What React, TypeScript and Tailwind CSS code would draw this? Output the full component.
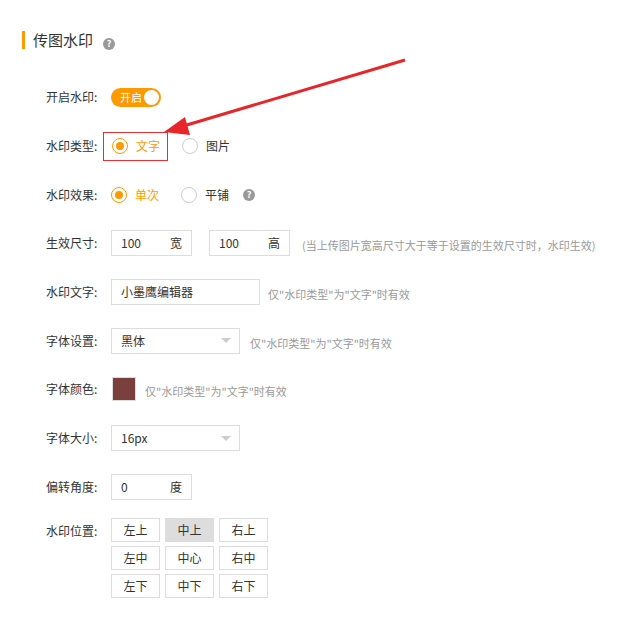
import React from 'react';

const font = { fontFamily: '"Microsoft YaHei","Noto Sans CJK SC",sans-serif' };

const Label: React.FC<{ children: React.ReactNode }> = ({ children }) => (
  <div className="w-[65px] shrink-0 text-[12px] text-[#333]">{children}</div>
);

const Row: React.FC<{ children: React.ReactNode }> = ({ children }) => (
  <div className="flex h-[48.7px] items-center">{children}</div>
);

const Help = () => (
  <span className="inline-flex h-[12px] w-[12px] items-center justify-center rounded-full bg-[#999] text-[9px] font-bold leading-none text-white">?</span>
);

const Radio: React.FC<{ on?: boolean; label: string }> = ({ on, label }) => (
  <div className="flex items-center gap-[8px]">
    <span className={`flex h-[16px] w-[16px] items-center justify-center rounded-full border ${on ? 'border-[#f90]' : 'border-[#ccc]'}`}>
      {on && <span className="h-[8px] w-[8px] rounded-full bg-[#f90]" />}
    </span>
    <span className={`text-[12px] ${on ? 'text-[#f90]' : 'text-[#333]'}`}>{label}</span>
  </div>
);

const Hint: React.FC<{ children: React.ReactNode }> = ({ children }) => (
  <span className="text-[11px] text-[#999]">{children}</span>
);

const Caret = () => <span className="h-0 w-0 border-x-[5px] border-t-[5px] border-x-transparent border-t-[#ccc]" />;

export default function App() {
  const cells = ['左上', '中上', '右上', '左中', '中心', '右中', '左下', '中下', '右下'];
  return (
    <div className="relative h-[620px] w-[620px] bg-white" style={font}>
      <div className="flex items-center pl-[22px] pt-[28px]">
        <div className="h-[18px] w-[3px] bg-[#f90]" />
        <span className="ml-[8px] text-[15px] text-[#333]">传图水印</span>
        <span className="ml-[10px]"><Help /></span>
      </div>
      <div className="pl-[46px] pt-[21px]">
        <Row>
          <Label>开启水印:</Label>
          <div className="flex h-[19px] w-[50px] items-center justify-between rounded-full bg-[#f90] pl-[9px] pr-[2px]">
            <span className="text-[11px] text-white">开启</span>
            <span className="h-[15px] w-[15px] rounded-full bg-white" />
          </div>
        </Row>
        <Row>
          <Label>水印类型:</Label>
          <div className="ml-[-8px] flex items-center gap-[14px]">
            <div className="flex h-[29px] w-[65px] items-center border border-[#e53030] pl-[8px]">
              <Radio on label="文字" />
            </div>
            <Radio label="图片" />
          </div>
        </Row>
        <Row>
          <Label>水印效果:</Label>
          <div className="flex items-center gap-[22px]">
            <Radio on label="单次" />
            <div className="flex items-center gap-[14px]"><Radio label="平铺" /><Help /></div>
          </div>
        </Row>
        <Row>
          <Label>生效尺寸:</Label>
          <div className="flex h-[26px] w-[81px] items-center justify-between border border-[#ddd] px-[9px] text-[12px] text-[#333]"><span>100</span><span>宽</span></div>
          <div className="ml-[17px] flex h-[26px] w-[81px] items-center justify-between border border-[#ddd] px-[9px] text-[12px] text-[#333]"><span>100</span><span>高</span></div>
          <span className="ml-[12px]"><Hint>(当上传图片宽高尺寸大于等于设置的生效尺寸时，水印生效)</Hint></span>
        </Row>
        <Row>
          <Label>水印文字:</Label>
          <div className="flex h-[26px] w-[149px] items-center border border-[#ddd] px-[9px] text-[12px] text-[#333]">小墨鹰编辑器</div>
          <span className="ml-[8px]"><Hint>仅"水印类型"为"文字"时有效</Hint></span>
        </Row>
        <Row>
          <Label>字体设置:</Label>
          <div className="flex h-[26px] w-[129px] items-center justify-between border border-[#ddd] pl-[9px] pr-[8px] text-[12px] text-[#333]"><span>黑体</span><Caret /></div>
          <span className="ml-[10px]"><Hint>仅"水印类型"为"文字"时有效</Hint></span>
        </Row>
        <Row>
          <Label>字体颜色:</Label>
          <div className="ml-[1px] h-[24px] w-[24px] border border-[#ddd] bg-[#7b3f3d]" />
          <span className="ml-[9px]"><Hint>仅"水印类型"为"文字"时有效</Hint></span>
        </Row>
        <Row>
          <Label>字体大小:</Label>
          <div className="flex h-[26px] w-[129px] items-center justify-between border border-[#ddd] pl-[9px] pr-[8px] text-[12px] text-[#333]"><span>16px</span><Caret /></div>
        </Row>
        <Row>
          <Label>偏转角度:</Label>
          <div className="flex h-[26px] w-[81px] items-center justify-between border border-[#ddd] px-[9px] text-[12px] text-[#333]"><span>0</span><span>度</span></div>
        </Row>
        <div className="flex pt-[7px]">
          <div className="pt-[4px]"><Label>水印位置:</Label></div>
          <div className="grid grid-cols-[49px_49px_49px] gap-x-[5px] gap-y-[4px]">
            {cells.map((c) => (
              <div key={c} className={`flex h-[24px] items-center justify-center border text-[12px] text-[#333] ${c === '中上' ? 'border-[#ddd] bg-[#ddd]' : 'border-[#ddd] bg-white'}`}>{c}</div>
            ))}
          </div>
        </div>
      </div>
      <svg className="absolute left-0 top-0" width="620" height="620">
        <line x1="405" y1="60" x2="180" y2="127" stroke="#e8262a" strokeWidth="3" />
        <polygon points="164,132 185,117 190,135" fill="#e8262a" />
      </svg>
    </div>
  );
}
